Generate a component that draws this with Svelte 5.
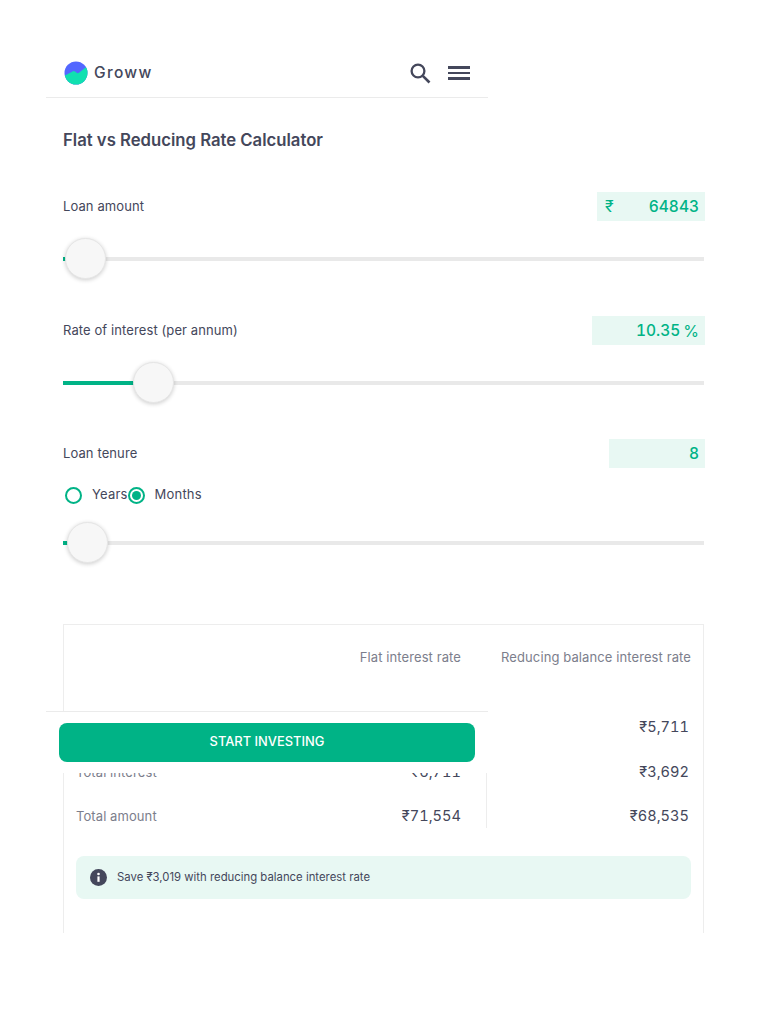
<script>
  const rows = [
    { label: 'Monthly EMI', flat: '₹5,963', reducing: '₹5,711' },
    { label: 'Total interest', flat: '₹6,711', reducing: '₹3,692' },
    { label: 'Total amount', flat: '₹71,554', reducing: '₹68,535' }
  ];
</script>

<div class="page">
  <header>
    <div class="brand">
      <svg width="24" height="24" viewBox="0 0 24 24">
        <defs><clipPath id="logo"><circle cx="12" cy="12" r="11.5" /></clipPath></defs>
        <g clip-path="url(#logo)">
          <rect width="24" height="24" fill="#5367ff" />
          <path d="M0 15 L9 10.3 Q10 9.8 11 10.5 L13 12 Q14 12.6 15 11.8 L24 4.5 V24 H0 Z" fill="#10e0b0" />
        </g>
      </svg>
      <span>Groww</span>
    </div>
    <div class="actions">
      <svg width="24" height="24" viewBox="0 0 24 24" fill="none" stroke="#44475b">
        <circle cx="10" cy="10" r="6.4" stroke-width="2.3" />
        <path d="M14.8 14.8 L21.5 21.5" stroke-width="2.6" />
      </svg>
      <div class="menu"><i></i><i></i><i></i></div>
    </div>
  </header>

  <main>
    <h1>Flat vs Reducing Rate Calculator</h1>

    <section class="field first">
      <div class="line">
        <label for="amount">Loan amount</label>
        <div class="value amount" id="amount"><span class="rupee">₹</span><b>64843</b></div>
      </div>
      <div class="slider">
        <div class="fill" style="width: 4px"></div>
        <div class="thumb" style="left: 2px"></div>
      </div>
    </section>

    <section class="field">
      <div class="line">
        <label for="rate">Rate of interest (per annum)</label>
        <div class="value rate" id="rate"><b>10.35</b><span class="pct">%</span></div>
      </div>
      <div class="slider">
        <div class="fill" style="width: 72px"></div>
        <div class="thumb" style="left: 70px"></div>
      </div>
    </section>

    <section class="field last">
      <div class="line">
        <label for="tenure">Loan tenure</label>
        <div class="value tenure" id="tenure"><b>8</b></div>
      </div>
      <div class="radios">
        <span class="radio"></span><span class="opt">Years</span>
        <span class="radio on"></span><span class="opt">Months</span>
      </div>
      <div class="slider tight">
        <div class="fill" style="width: 5px"></div>
        <div class="thumb" style="left: 4px"></div>
      </div>
    </section>

    <section class="table">
      <div class="head">
        <span></span>
        <span>Flat interest rate</span>
        <span>Reducing balance interest rate</span>
      </div>
      <div class="body">
        {#each rows as row}
          <div class="row">
            <span class="name">{row.label}</span>
            <span class="num">{row.flat}</span>
            <span class="num">{row.reducing}</span>
          </div>
        {/each}
      </div>
      <div class="note">
        <svg width="17" height="17" viewBox="0 0 17 17">
          <circle cx="8.5" cy="8.5" r="8.5" fill="#44475b" />
          <rect x="7.4" y="7.4" width="2.2" height="5.4" fill="#fff" />
          <circle cx="8.5" cy="5" r="1.3" fill="#fff" />
        </svg>
        <span>Save ₹3,019 with reducing balance interest rate</span>
      </div>
    </section>
  </main>

  <div class="cta">
    <button>START INVESTING</button>
  </div>
</div>

<style>
  :global(body) {
    background: #fff;
    font-family: Inter, 'Noto Sans', sans-serif;
    color: #44475b;
  }

  .page {
    position: relative;
    height: 1024px;
    overflow: hidden;
    padding-top: 48px;
    box-sizing: border-box;
  }

  header {
    margin-left: 46px;
    width: 442px;
    height: 50px;
    box-sizing: border-box;
    border-bottom: 1px solid #ebebeb;
    display: flex;
    justify-content: space-between;
    align-items: center;
    padding: 0 18px;
  }
  .brand {
    display: flex;
    align-items: center;
    gap: 6px;
  }
  .brand span {
    font-size: 15.5px;
    font-weight: 500;
    letter-spacing: 1.3px;
  }
  .actions {
    display: flex;
    align-items: center;
    gap: 16px;
    margin-top: 1px;
  }
  .menu {
    display: flex;
    flex-direction: column;
    gap: 3.2px;
    width: 22px;
  }
  .menu i {
    height: 2.6px;
    background: #44475b;
  }

  main {
    margin-left: 63px;
    width: 641px;
  }
  h1 {
    margin: 32px 0 0;
    font-size: 16.7px;
    line-height: 20px;
    font-weight: 600;
  }

  .field.first {
    margin-top: 42px;
  }
  .field {
    margin-top: 55px;
  }
  .field.last {
    margin-top: 54px;
  }
  .line {
    display: flex;
    justify-content: space-between;
    align-items: center;
    height: 29px;
  }
  label {
    font-size: 13px;
    line-height: 16px;
    margin-top: -2px;
    letter-spacing: 0.1px;
  }
  .value {
    height: 29px;
    margin-right: -1px;
    background: #e8f8f3;
    color: #00b386;
    display: flex;
    align-items: center;
    justify-content: flex-end;
    padding: 0 6px 0 8px;
    box-sizing: border-box;
    font-size: 15.5px;
    font-variant-numeric: tabular-nums;
  }
  .value b {
    font-weight: 500;
  }
  .amount { width: 108px; justify-content: space-between; }
  .rate { width: 113px; gap: 3px; }
  .tenure { width: 96px; }
  .rupee { font-size: 16px; margin-top: -1px; }
  .pct { font-size: 16px; }

  .slider {
    position: relative;
    height: 4px;
    background: #e9e9e9;
    margin-top: 36px;
    width: 641px;
  }
  .slider.tight {
    margin-top: 31px;
  }
  .fill {
    height: 4px;
    background: #00b386;
  }
  .thumb {
    position: absolute;
    top: -19px;
    width: 41px;
    height: 41px;
    box-sizing: border-box;
    border-radius: 50%;
    background: #f7f7f7;
    border: 1px solid #e6e6e6;
    box-shadow: 0 1px 4px rgba(0, 0, 0, 0.2);
  }

  .radios {
    display: flex;
    align-items: center;
    margin: 12px 0 0 2px;
    height: 30px;
    font-size: 13px;
    letter-spacing: 0.2px;
  }
  .radio {
    width: 17px;
    height: 17px;
    box-sizing: border-box;
    border: 2px solid #00b386;
    border-radius: 50%;
    background: #fff;
    position: relative;
  }
  .radio.on::after {
    content: '';
    position: absolute;
    inset: 2px;
    background: #00b386;
    border-radius: 50%;
  }
  .opt {
    margin-left: 10px;
    margin-top: -2px;
  }

  .table {
    margin-top: 79px;
    height: 309px;
    border: 1px solid #ededed;
    border-bottom: none;
    box-sizing: border-box;
  }
  .head {
    display: grid;
    grid-template-columns: 1fr 140px 230px;
    padding: 24px 12px 0;
    font-size: 13px;
    line-height: 16px;
    letter-spacing: 0.1px;
    color: #7c7e8c;
    text-align: right;
    height: 79px;
    box-sizing: border-box;
  }
  .body {
    position: relative;
    padding: 1px 14px 0 12px;
  }
  .body::after {
    content: '';
    position: absolute;
    left: 422px;
    top: 10px;
    bottom: 11px;
    width: 1px;
    background: #ededed;
  }
  .row {
    display: grid;
    grid-template-columns: 1fr 140px 228px;
    align-items: center;
    height: 44.5px;
    text-align: right;
    font-size: 14.6px;
    font-variant-numeric: tabular-nums;
  }
  .name {
    text-align: left;
    font-size: 13px;
    letter-spacing: 0.1px;
    color: #7c7e8c;
  }
  .note {
    margin: 17px 12px 0;
    height: 43px;
    background: #e8f8f3;
    border-radius: 8px;
    display: flex;
    align-items: center;
    gap: 10px;
    padding: 0 14px;
    font-size: 11.35px;
  }

  .cta {
    position: absolute;
    left: 46px;
    top: 711px;
    width: 442px;
    height: 62px;
    box-sizing: border-box;
    background: #fff;
    border-top: 1px solid #ebebeb;
    padding: 11px 13px 0;
  }
  button {
    display: block;
    width: 416px;
    height: 39px;
    padding: 0 0 3px;
    border: none;
    border-radius: 8px;
    background: #00b386;
    color: #fff;
    font-family: inherit;
    font-size: 12.9px;
    font-weight: 500;
  }
</style>
